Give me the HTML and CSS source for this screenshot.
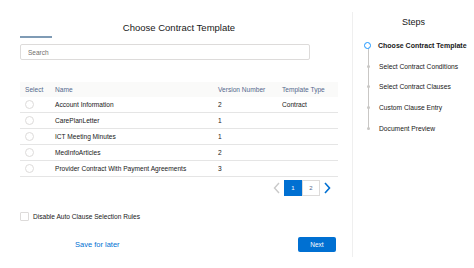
FILE: index.html
```html
<!DOCTYPE html>
<html lang="en">
<head>
    <meta charset="UTF-8">
    <title>Choose Contract Template</title>
    <link rel="stylesheet" href="styles.css">
</head>
<body>
    <div class="layout">
        <div class="main">
            <h1 class="title">Choose Contract Template</h1>
            <div class="tab-bar"></div>
            <input class="search" type="text" placeholder="Search">

            <table class="templates">
                <thead>
                    <tr>
                        <th class="col-select">Select</th>
                        <th class="col-name">Name</th>
                        <th class="col-version">Version Number</th>
                        <th class="col-type">Template Type</th>
                    </tr>
                </thead>
                <tbody>
                    <tr><td><span class="radio"></span></td><td>Account Information</td><td>2</td><td>Contract</td></tr>
                    <tr><td><span class="radio"></span></td><td>CarePlanLetter</td><td>1</td><td></td></tr>
                    <tr><td><span class="radio"></span></td><td>ICT Meeting Minutes</td><td>1</td><td></td></tr>
                    <tr><td><span class="radio"></span></td><td>MedInfoArticles</td><td>2</td><td></td></tr>
                    <tr><td><span class="radio"></span></td><td>Provider Contract With Payment Agreements</td><td>3</td><td></td></tr>
                </tbody>
            </table>

            <div class="pager">
                <svg class="arrow" width="8" height="12" viewBox="0 0 8 12"><path d="M6 1 L1.5 6 L6 11" fill="none" stroke="#c9c9c9" stroke-width="1.4"/></svg>
                <span class="page active">1</span>
                <span class="page">2</span>
                <svg class="arrow" width="8" height="12" viewBox="0 0 8 12"><path d="M2 1 L6.5 6 L2 11" fill="none" stroke="#0070d2" stroke-width="1.6"/></svg>
            </div>

            <label class="option">
                <span class="checkbox"></span>
                Disable Auto Clause Selection Rules
            </label>

            <div class="actions">
                <a href="#" class="save">Save for later</a>
                <button class="next">Next</button>
            </div>
        </div>

        <div class="steps">
            <h2 class="steps-title">Steps</h2>
            <ul class="step-list">
                <li class="step current"><span class="marker"></span>Choose Contract Template</li>
                <li class="step"><span class="marker"></span>Select Contract Conditions</li>
                <li class="step"><span class="marker"></span>Select Contract Clauses</li>
                <li class="step"><span class="marker"></span>Custom Clause Entry</li>
                <li class="step last"><span class="marker"></span>Document Preview</li>
            </ul>
        </div>
    </div>
</body>
</html>
```

FILE: styles.css
```css
body {
    margin: 0;
    font-family: 'Liberation Sans', Arial, sans-serif;
    background-color: #fff;
    color: #181818;
}

.layout {
    display: flex;
    height: 268px;
}

.main {
    width: 318px;
    padding: 0 14px 0 20px;
    border-right: 1px solid #efefef;
    margin: 12px 0 11px 0;
    display: flex;
    flex-direction: column;
}

.title {
    margin: 9px 0 0 0;
    font-size: 9.5px;
    font-weight: normal;
    text-align: center;
    color: #181818;
    line-height: 13px;
}

.tab-bar {
    width: 32px;
    height: 2px;
    background-color: #7f9bb5;
    margin-top: 2px;
}

.search {
    width: 290px;
    height: 16px;
    box-sizing: border-box;
    margin-top: 6px;
    border: 1px solid #dddbda;
    border-radius: 2px;
    padding: 0 7px;
    font-family: inherit;
    font-size: 6.5px;
    color: #181818;
}

.search::placeholder {
    color: #706e6b;
}

.templates {
    margin-top: 22px;
    width: 318px;
    border-collapse: collapse;
    font-size: 6.6px;
}

.templates th {
    background-color: #fafaf9;
    font-weight: normal;
    color: #54698d;
    text-align: left;
    height: 15px;
    padding: 0;
}

.templates td {
    height: 15px;
    padding: 0;
    border-bottom: 1px solid #e5e5e5;
    color: #181818;
}

.col-select {
    width: 30px;
    padding-left: 5px !important;
}

.col-name {
    width: 163px;
}

.col-version {
    width: 64px;
}

.templates td:first-child {
    padding-left: 5px;
}

.radio {
    display: block;
    width: 7px;
    height: 7px;
    border: 1px solid #dddbda;
    border-radius: 50%;
}

.pager {
    display: flex;
    align-items: center;
    justify-content: flex-end;
    margin-top: 3px;
    margin-right: 4px;
}

.page {
    width: 18px;
    height: 16px;
    box-sizing: border-box;
    border: 1px solid #dddbda;
    font-size: 6px;
    display: flex;
    align-items: center;
    justify-content: center;
    color: #54698d;
}

.page.active {
    background-color: #0070d2;
    border-color: #0070d2;
    color: #fff;
}

.arrow {
    margin: 0 3px;
}

.option {
    display: flex;
    align-items: center;
    gap: 4px;
    margin-top: 16px;
    font-size: 6.6px;
    color: #181818;
}

.checkbox {
    width: 7px;
    height: 7px;
    border: 1px solid #dddbda;
    border-radius: 1px;
}

.actions {
    display: flex;
    align-items: center;
    justify-content: space-between;
    margin-top: 16px;
}

.save {
    margin-left: 55px;
    font-size: 7.5px;
    color: #0070d2;
    text-decoration: none;
}

.next {
    width: 38px;
    height: 15px;
    margin-right: 2px;
    background-color: #0070d2;
    border: none;
    border-radius: 2px;
    color: #fff;
    font-family: inherit;
    font-size: 6.5px;
}

.steps {
    flex: 1;
}

.steps-title {
    margin: 16px 0 0 0;
    font-size: 9px;
    font-weight: normal;
    text-align: center;
    color: #181818;
    line-height: 12px;
}

.step-list {
    list-style: none;
    padding: 0;
    margin: 7px 0 0 11px;
}

.step {
    position: relative;
    display: flex;
    align-items: center;
    height: 20.8px;
    font-size: 6.7px;
    color: #181818;
    white-space: nowrap;
}

.step::after {
    content: "";
    position: absolute;
    left: 4px;
    top: 10px;
    height: 21px;
    border-left: 1px solid #c9c7c5;
}

.step.last::after {
    display: none;
}

.marker {
    width: 3px;
    height: 3px;
    margin: 0 9px 0 3px;
    background-color: #c9c7c5;
    border-radius: 50%;
    position: relative;
    z-index: 1;
}

.step.current {
    font-weight: bold;
    font-size: 7px;
}

.step.current .marker {
    width: 5px;
    height: 5px;
    margin: 0 7px 0 0;
    border: 1.5px solid #1b96ff;
    background-color: #fff;
}
```
